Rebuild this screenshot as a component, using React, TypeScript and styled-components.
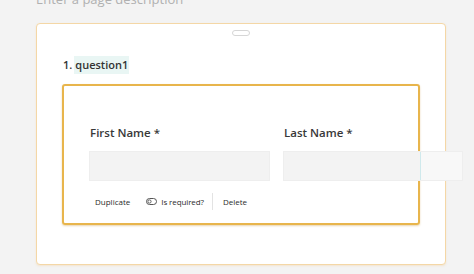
import React from "react";
import styled, { createGlobalStyle } from "styled-components";

const Global = createGlobalStyle`
  html, body { margin: 0; padding: 0; background: #f3f3f3; }
  body { font-family: "Open Sans", "Noto Sans", sans-serif; color: #2b2b2b; overflow: hidden; }
`;

const Page = styled.div`
  width: 474px;
  height: 274px;
  padding-left: 36px;
  box-sizing: border-box;
  overflow: hidden;
`;

const Description = styled.div`
  margin-top: -9px;
  height: 16px;
  margin-bottom: 16px;
  font-size: 13px;
  line-height: 16px;
  color: #b0b0b0;
`;

const Card = styled.div`
  width: 410px;
  height: 242px;
  box-sizing: border-box;
  background: #fff;
  border: 1px solid #f4d7a6;
  border-radius: 4px;
  box-shadow: 0 1px 2px rgba(240, 200, 140, 0.35);
  display: flex;
  flex-direction: column;
`;

const HandleRow = styled.div`
  display: flex;
  justify-content: center;
  padding-top: 6px;
  height: 6px;
`;

const Handle = styled.div`
  width: 16px;
  height: 4px;
  border: 1px solid #d6d6d6;
  border-radius: 3px;
`;

const Title = styled.div`
  margin: 20px 0 0 26px;
  height: 18px;
  font-size: 11px;
  line-height: 18px;
  font-weight: 600;
  color: #333;
  display: flex;
`;

const Highlight = styled.span`
  background: #e9f6f4;
  padding: 0 1px;
  margin-left: 2px;
`;

const Question = styled.div`
  margin: 10px 0 0 25px;
  width: 358px;
  height: 141px;
  box-sizing: border-box;
  border: 2px solid #e8b54c;
  border-radius: 3px;
  box-shadow: 0 1px 2px rgba(200, 150, 60, 0.4);
  padding: 38px 0 0 25px;
  display: flex;
  flex-direction: column;
`;

const Fields = styled.div`
  display: grid;
  grid-template-columns: 181px 180px;
  column-gap: 13px;
`;

const Field = styled.div`
  display: flex;
  flex-direction: column;
`;

const Label = styled.div`
  font-size: 11.5px;
  line-height: 18px;
  font-weight: 600;
  color: #383838;
  padding-left: 1px;
  margin-bottom: 9px;
`;

const Input = styled.div<{ $split?: boolean }>`
  height: 30px;
  background: ${(p) =>
    p.$split
      ? "linear-gradient(to right, #f3f3f3 0, #f3f3f3 136px, #cfe9ec 136px, #cfe9ec 137px, #f8f8f8 137px)"
      : "#f3f3f3"};
  border: 1px solid #eeeeee;
  box-sizing: border-box;
`;

const Toolbar = styled.div`
  margin-top: 11px;
  padding-left: 6px;
  height: 18px;
  display: flex;
  align-items: center;
  font-size: 8px;
  color: #2b2b2b;
`;

const Action = styled.span`
  margin-right: 16px;
`;

const Toggle = styled.span`
  display: inline-flex;
  align-items: center;
  gap: 4px;
  margin-right: 8px;
  letter-spacing: -0.1px;
`;

const Divider = styled.span`
  width: 1px;
  height: 17px;
  background: #e3e3e3;
  margin-right: 10px;
`;

const ToggleIcon = () => (
  <svg width="11" height="7" viewBox="0 0 11 7">
    <rect x="0.5" y="0.5" width="10" height="6" rx="3" fill="none" stroke="#555" strokeWidth="1" />
    <circle cx="3.5" cy="3.5" r="1.6" fill="none" stroke="#555" strokeWidth="0.9" />
  </svg>
);

export default function App() {
  return (
    <>
      <Global />
      <Page>
        <Description>Enter a page description</Description>
        <Card>
          <HandleRow>
            <Handle />
          </HandleRow>
          <Title>
            1.<Highlight>question1</Highlight>
          </Title>
          <Question>
            <Fields>
              <Field>
                <Label>First Name *</Label>
                <Input />
              </Field>
              <Field>
                <Label>Last Name *</Label>
                <Input $split />
              </Field>
            </Fields>
            <Toolbar>
              <Action>Duplicate</Action>
              <Toggle>
                <ToggleIcon />
                Is required?
              </Toggle>
              <Divider />
              <span>Delete</span>
            </Toolbar>
          </Question>
        </Card>
      </Page>
    </>
  );
}
